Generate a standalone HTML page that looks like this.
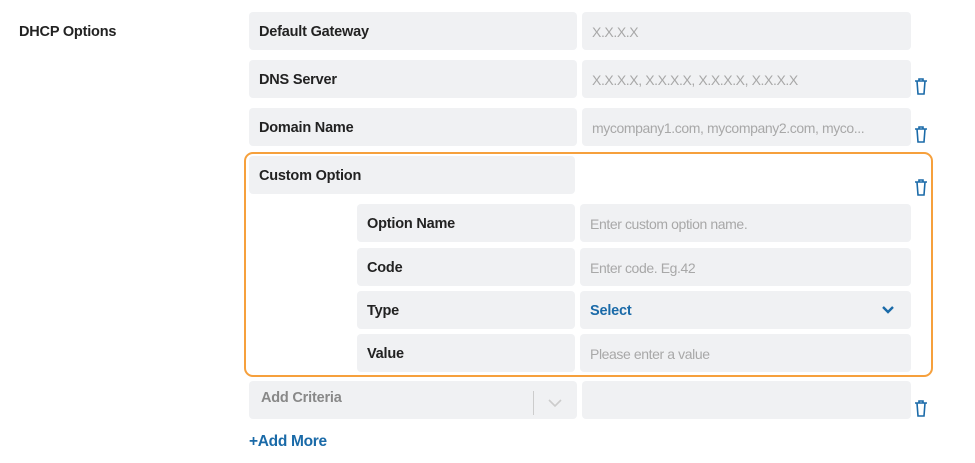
<!DOCTYPE html>
<html><head><style>
body{margin:0;width:975px;height:463px;background:#fff;font-family:"Liberation Sans",sans-serif;position:relative;overflow:hidden}
.a{position:absolute}
.b{position:absolute;background:#f0f1f3;border-radius:4px;box-sizing:border-box;padding-left:10px;padding-top:2px;display:flex;align-items:center;font-size:14.5px;color:#222;font-weight:bold;letter-spacing:-0.2px}
.p{font-weight:normal;color:#a8a8a8;font-size:14px;letter-spacing:-0.4px}
.t{position:absolute;width:14px;height:17px}
</style></head><body>
<div class="a" style="left:19px;top:24px;font-size:14.5px;font-weight:bold;color:#222;letter-spacing:-0.2px">DHCP Options</div>

<div class="b" style="left:249px;top:12px;width:328px;height:38px">Default Gateway</div>
<div class="b p" style="left:582px;top:12px;width:329px;height:38px">X.X.X.X</div>
<div class="b" style="left:249px;top:60px;width:328px;height:38px">DNS Server</div>
<div class="b p" style="left:582px;top:60px;width:329px;height:38px">X.X.X.X, X.X.X.X, X.X.X.X, X.X.X.X</div>
<div class="b" style="left:249px;top:108px;width:328px;height:38px">Domain Name</div>
<div class="b p" style="left:582px;top:108px;width:329px;height:38px">mycompany1.com, mycompany2.com, myco...</div>

<div class="a" style="left:244px;top:152px;width:689px;height:225px;border:2px solid #f6a03c;border-radius:9px;box-sizing:border-box"></div>
<div class="b" style="left:249px;top:156px;width:326px;height:38px">Custom Option</div>
<div class="b" style="left:357px;top:204px;width:218px;height:38px">Option Name</div>
<div class="b p" style="left:580px;top:204px;width:331px;height:38px">Enter custom option name.</div>
<div class="b" style="left:357px;top:248px;width:218px;height:38px">Code</div>
<div class="b p" style="left:580px;top:248px;width:331px;height:38px">Enter code. Eg.42</div>
<div class="b" style="left:357px;top:291px;width:218px;height:38px">Type</div>
<div class="b" style="left:580px;top:291px;width:331px;height:38px;color:#1a6aa8;font-weight:bold">Select
<svg style="position:absolute;right:16px;top:14px" width="14" height="10" viewBox="0 0 14 10"><path d="M2 2l5 5 5-5" fill="none" stroke="#1a6aa8" stroke-width="2.4"/></svg></div>
<div class="b" style="left:357px;top:334px;width:218px;height:38px">Value</div>
<div class="b p" style="left:580px;top:334px;width:331px;height:38px">Please enter a value</div>

<div class="b" style="left:249px;top:381px;width:328px;height:38px;color:#888;padding-left:12px;align-items:flex-start;padding-top:9px">Add Criteria
<div class="a" style="left:284px;top:10px;width:1px;height:24px;background:#ccc"></div>
<svg style="position:absolute;left:299px;top:18px" width="14" height="9" viewBox="0 0 14 9"><path d="M1 1l6 6 6-6" fill="none" stroke="#ccc" stroke-width="1.6"/></svg></div>
<div class="b" style="left:582px;top:381px;width:329px;height:38px"></div>

<div class="a" style="left:249px;top:433px;font-size:15.5px;color:#1a6aa8;font-weight:bold;letter-spacing:-0.3px">+Add More</div>

<svg class="t" style="left:914px;top:78px" viewBox="0 0 14 17"><path d="M1 3h12M5 3V1h4v2M3 3l1 13h6l1-13" fill="none" stroke="#1a6aa8" stroke-width="1.6"/></svg>
<svg class="t" style="left:914px;top:126px" viewBox="0 0 14 17"><path d="M1 3h12M5 3V1h4v2M3 3l1 13h6l1-13" fill="none" stroke="#1a6aa8" stroke-width="1.6"/></svg>
<svg class="t" style="left:914px;top:179px" viewBox="0 0 14 17"><path d="M1 3h12M5 3V1h4v2M3 3l1 13h6l1-13" fill="none" stroke="#1a6aa8" stroke-width="1.6"/></svg>
<svg class="t" style="left:914px;top:400px" viewBox="0 0 14 17"><path d="M1 3h12M5 3V1h4v2M3 3l1 13h6l1-13" fill="none" stroke="#1a6aa8" stroke-width="1.6"/></svg>
</body></html>
